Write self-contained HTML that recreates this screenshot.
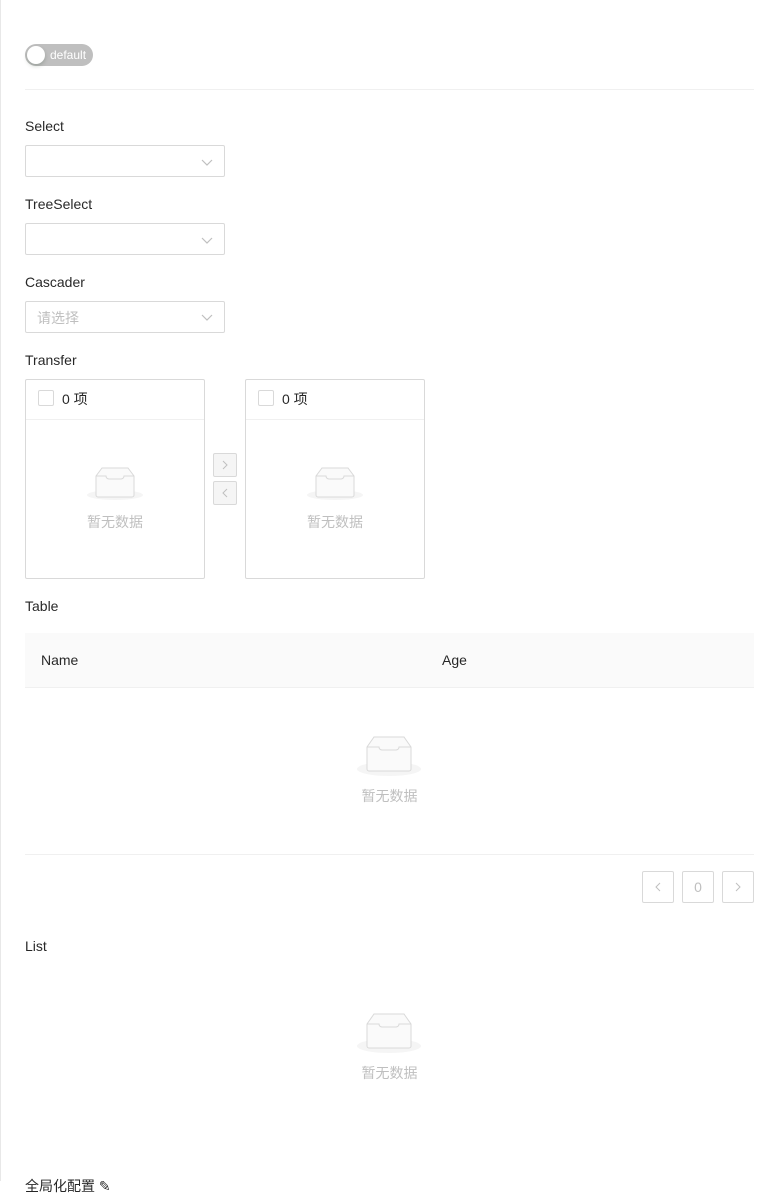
<!DOCTYPE html>
<html><head><meta charset="utf-8"><style>
*{box-sizing:border-box;margin:0;padding:0}
body{width:777px;height:1181px;overflow:hidden;background:#fff;font-family:"Liberation Sans","Noto Sans CJK SC",sans-serif;font-size:14px;color:rgba(0,0,0,.85);position:relative}
.a{position:absolute}
.lbl{position:absolute;left:25px;font-size:14px;color:rgba(0,0,0,.85)}
.sel{position:absolute;left:25px;width:200px;height:32px;border:1px solid #d9d9d9;border-radius:2px}
.sel svg{position:absolute;right:11px;top:11px}
.ph{position:absolute;left:11px;top:6px;color:#bfbfbf}
.tb{position:absolute;top:379px;width:180px;height:200px;border:1px solid #d9d9d9;border-radius:2px}
.tb .hd{height:40px;border-bottom:1px solid #f0f0f0;position:relative}
.cb{position:absolute;left:12px;top:10px;width:16px;height:16px;border:1px solid #d9d9d9;border-radius:2px}
.tb .hd span{position:absolute;left:36px;top:9px}
.empty{color:#bfbfbf;text-align:center;position:absolute;font-size:14px}
.btn{position:absolute;left:213px;width:24px;height:24px;border:1px solid #d9d9d9;background:#f5f5f5;border-radius:2px}
.pg{position:absolute;top:871px;width:32px;height:32px;border:1px solid #d9d9d9;border-radius:2px;text-align:center;line-height:30px;color:#bfbfbf}
</style></head><body>
<div class="a" style="left:0;top:0;width:1px;height:1181px;background:#e8e8e8"></div>
<div class="a" style="left:25px;top:44px;width:68px;height:22px;border-radius:11px;background:#bfbfbf"></div>
<div class="a" style="left:27px;top:46px;width:18px;height:18px;border-radius:9px;background:#fff;box-shadow:0 2px 4px rgba(0,35,11,.2)"></div>
<div class="a" style="left:50px;top:48px;font-size:12px;color:#fff">default</div>
<div class="a" style="left:25px;top:89px;width:729px;height:1px;background:#f0f0f0"></div>

<div class="lbl" style="top:118px">Select</div>
<div class="sel" style="top:145px"><svg width="12" height="10" viewBox="0 0 12 10"><path d="M1 3l5 5 5-5" fill="none" stroke="#bfbfbf" stroke-width="1.2"/></svg></div>
<div class="lbl" style="top:196px">TreeSelect</div>
<div class="sel" style="top:223px"><svg width="12" height="10" viewBox="0 0 12 10"><path d="M1 3l5 5 5-5" fill="none" stroke="#bfbfbf" stroke-width="1.2"/></svg></div>
<div class="lbl" style="top:274px">Cascader</div>
<div class="sel" style="top:301px"><span class="ph">请选择</span><svg width="12" height="10" viewBox="0 0 12 10" style="top:10px"><path d="M1 3l5 5 5-5" fill="none" stroke="#bfbfbf" stroke-width="1.2"/></svg></div>
<div class="lbl" style="top:352px">Transfer</div>

<div class="tb" style="left:25px"><div class="hd"><div class="cb"></div><span>0 项</span></div>
<svg class="a" style="left:61px;top:86px" width="56" height="36" viewBox="0 0 56 36"><ellipse cx="28" cy="29" rx="28" ry="5" fill="#f5f5f5"/><path d="M9 10l6-8h26l6 8v19a2 2 0 0 1-2 2H11a2 2 0 0 1-2-2z" fill="#fafafa" stroke="#d9d9d9"/><path d="M9 10h10a3 3 0 0 0 3 3h12a3 3 0 0 0 3-3h10" fill="none" stroke="#d9d9d9"/></svg>
<div class="empty" style="left:0;width:178px;top:132px">暂无数据</div></div>
<div class="btn" style="top:453px"><svg width="22" height="22" viewBox="0 0 22 22"><path d="M9 7l4 4-4 4" fill="none" stroke="#bfbfbf"/></svg></div>
<div class="btn" style="top:481px"><svg width="22" height="22" viewBox="0 0 22 22"><path d="M13 7l-4 4 4 4" fill="none" stroke="#bfbfbf"/></svg></div>
<div class="tb" style="left:245px"><div class="hd"><div class="cb"></div><span>0 项</span></div>
<svg class="a" style="left:61px;top:86px" width="56" height="36" viewBox="0 0 56 36"><ellipse cx="28" cy="29" rx="28" ry="5" fill="#f5f5f5"/><path d="M9 10l6-8h26l6 8v19a2 2 0 0 1-2 2H11a2 2 0 0 1-2-2z" fill="#fafafa" stroke="#d9d9d9"/><path d="M9 10h10a3 3 0 0 0 3 3h12a3 3 0 0 0 3-3h10" fill="none" stroke="#d9d9d9"/></svg>
<div class="empty" style="left:0;width:178px;top:132px">暂无数据</div></div>

<div class="lbl" style="top:598px">Table</div>
<div class="a" style="left:25px;top:633px;width:729px;height:55px;background:#fafafa;border-bottom:1px solid #f0f0f0"></div>
<div class="a" style="left:41px;top:652px">Name</div>
<div class="a" style="left:442px;top:652px">Age</div>
<svg class="a" style="left:357px;top:735px" width="64" height="42" viewBox="0 0 64 42"><ellipse cx="32" cy="34" rx="32" ry="7" fill="#f5f5f5"/><path d="M10 12l7-10h30l7 10v22a2 2 0 0 1-2 2H12a2 2 0 0 1-2-2z" fill="#fafafa" stroke="#d9d9d9"/><path d="M10 12h12a3 3 0 0 0 3 3h14a3 3 0 0 0 3-3h12" fill="none" stroke="#d9d9d9"/></svg>
<div class="empty" style="left:25px;width:729px;top:786px">暂无数据</div>
<div class="a" style="left:25px;top:854px;width:729px;height:1px;background:#f0f0f0"></div>
<div class="pg" style="left:642px"><svg width="30" height="30" viewBox="0 0 30 30"><path d="M17 11l-4 4 4 4" fill="none" stroke="#bfbfbf"/></svg></div>
<div class="pg" style="left:682px">0</div>
<div class="pg" style="left:722px"><svg width="30" height="30" viewBox="0 0 30 30"><path d="M13 11l4 4-4 4" fill="none" stroke="#bfbfbf"/></svg></div>

<div class="lbl" style="top:938px">List</div>
<svg class="a" style="left:357px;top:1012px" width="64" height="42" viewBox="0 0 64 42"><ellipse cx="32" cy="34" rx="32" ry="7" fill="#f5f5f5"/><path d="M10 12l7-10h30l7 10v22a2 2 0 0 1-2 2H12a2 2 0 0 1-2-2z" fill="#fafafa" stroke="#d9d9d9"/><path d="M10 12h12a3 3 0 0 0 3 3h14a3 3 0 0 0 3-3h12" fill="none" stroke="#d9d9d9"/></svg>
<div class="empty" style="left:25px;width:729px;top:1063px">暂无数据</div>
<div class="lbl" style="top:1176px">全局化配置 ✎</div>
</body></html>
